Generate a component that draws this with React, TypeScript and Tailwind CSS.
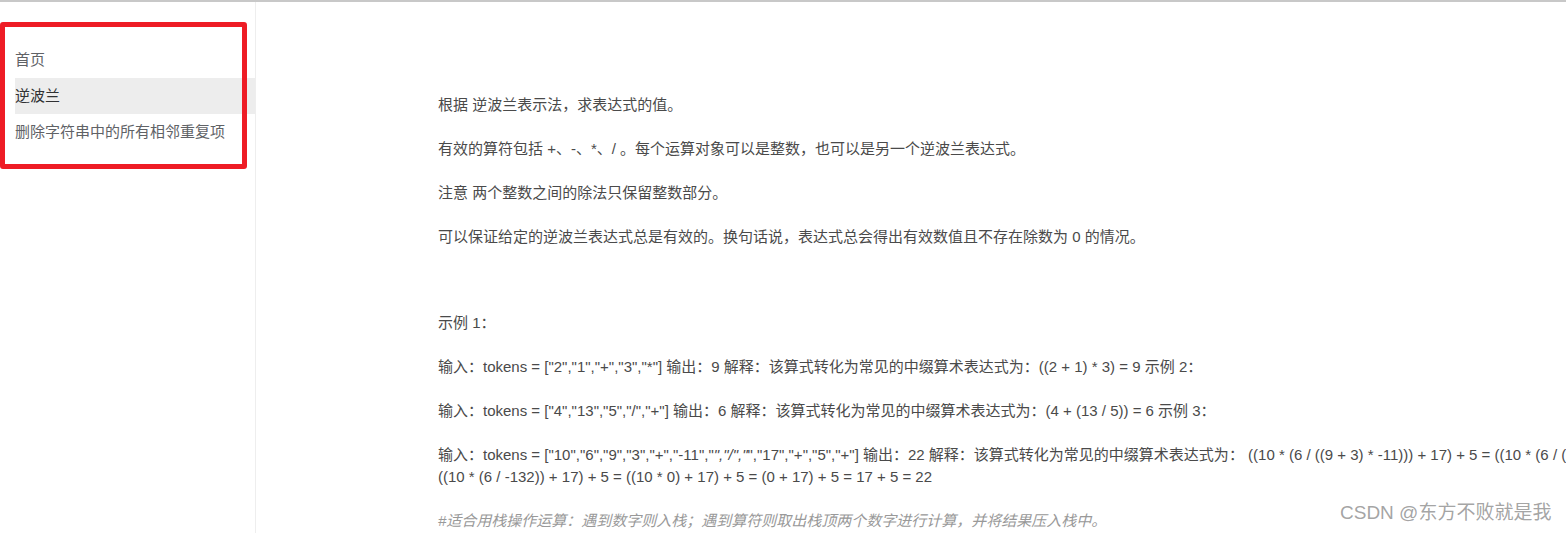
import React from 'react'

const menu = [
  { label: '首页', active: false },
  { label: '逆波兰', active: true },
  { label: '删除字符串中的所有相邻重复项', active: false },
]

const font = 'font-["Liberation_Sans","Noto_Sans_CJK_SC",sans-serif]'

const App: React.FC = () => {
  return (
    <div className={`relative h-[533px] w-screen overflow-hidden bg-white ${font}`}>
      <div className="flex h-full border-t-2 border-[#c8c8c8]">
        {/* Sidebar */}
        <aside className="w-[256px] shrink-0 border-r border-[#eeeeee] pt-[40px] pl-[15px]">
          {menu.map((item) => (
            <div
              key={item.label}
              className={`h-[36px] text-[15px] leading-[36px] ${
                item.active ? 'bg-[#ededed] text-[#303133]' : 'text-[#606266]'
              }`}
            >
              {item.label}
            </div>
          ))}
        </aside>

        {/* Content */}
        <main className="shrink-0 pl-[182px] pt-[92px]">
          <div className="flex w-[1280px] flex-col gap-[22px] text-[15px] leading-[22px] text-[#4a4a4a]">
            <p>根据 逆波兰表示法，求表达式的值。</p>
            <p>有效的算符包括 +、-、*、/ 。每个运算对象可以是整数，也可以是另一个逆波兰表达式。</p>
            <p>注意 两个整数之间的除法只保留整数部分。</p>
            <p>可以保证给定的逆波兰表达式总是有效的。换句话说，表达式总会得出有效数值且不存在除数为 0 的情况。</p>
            <p className="leading-[20px]">&nbsp;</p>
            <p>示例 1：</p>
            <p>
              输入：tokens = ["2","1","+","3","*"] 输出：9 解释：该算式转化为常见的中缀算术表达式为：((2 + 1) * 3) = 9 示例 2：
            </p>
            <p>
              输入：tokens = ["4","13","5","/","+"] 输出：6 解释：该算式转化为常见的中缀算术表达式为：(4 + (13 / 5)) = 6 示例 3：
            </p>
            <p>
              输入：tokens = ["10","6","9","3","+","-11","<em>","/","</em>","17","+","5","+"] 输出：22 解释：该算式转化为常见的中缀算术表达式为：
              ((10 * (6 / ((9 + 3) * -11))) + 17) + 5 = ((10 * (6 / (12 * -11))) + 17) + 5 = ((10 * (6 / -132)) + 17) + 5 = ((10 * 0) + 17) + 5 = (0 + 17) + 5 = 17 + 5 = 22
            </p>
            <p className="italic text-[#999999]">
              #适合用栈操作运算：遇到数字则入栈；遇到算符则取出栈顶两个数字进行计算，并将结果压入栈中。
            </p>
          </div>
        </main>
      </div>

      {/* Red annotation box */}
      <div className="pointer-events-none absolute left-0 top-[22px] h-[147px] w-[247px] rounded-[3px] border-[5px] border-[#ee1c25]" />

      {/* Watermark */}
      <div className="pointer-events-none absolute left-[1340px] top-[500px] text-[19px] leading-[26px] text-[#8c8c8c]/80">
        CSDN @东方不败就是我
      </div>
    </div>
  )
}

export default App
